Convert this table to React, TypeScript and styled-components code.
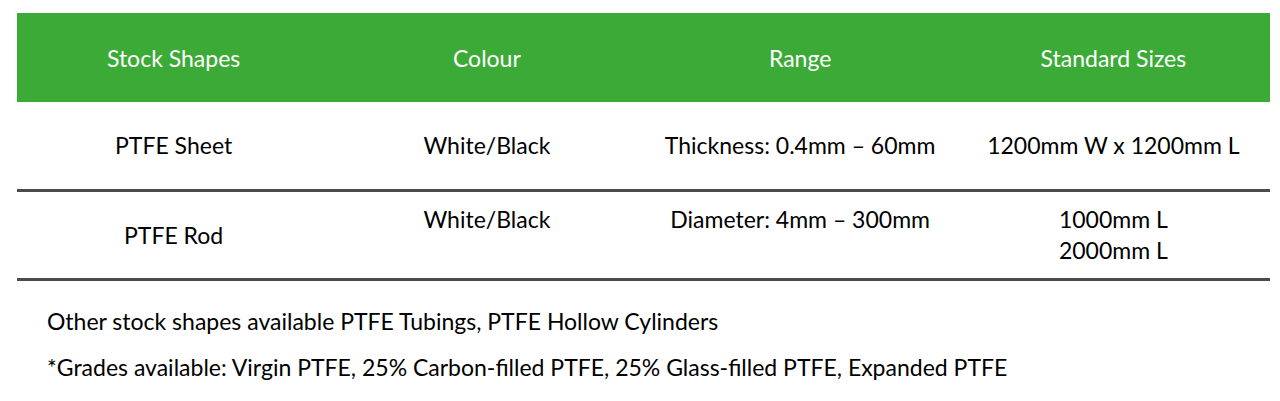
import React from 'react';
import styled, { createGlobalStyle } from 'styled-components';

const GlobalStyle = createGlobalStyle`
  body {
    margin: 0;
    background: #ffffff;
    font-family: Lato, "Open Sans", sans-serif;
  }
`;

const Page = styled.div`
  width: 1280px;
  box-sizing: border-box;
  padding: 13px 10px 0 17px;
`;

const Table = styled.div`
  display: flex;
  flex-direction: column;
`;

const HeaderRow = styled.div`
  display: grid;
  grid-template-columns: repeat(4, 1fr);
  align-items: center;
  height: 89px;
  background-color: #3caa36;
  color: #ffffff;
  font-size: 23px;
`;

const HeaderCell = styled.div`
  text-align: center;
`;

const BodyRow = styled.div<{ $pad: number }>`
  display: grid;
  grid-template-columns: repeat(4, 1fr);
  padding: ${p => p.$pad}px 0;
  border-bottom: 3px solid #4b4b4b;
  color: #000000;
  font-size: 23px;
  line-height: 31px;
`;

const Cell = styled.div<{ $valign?: 'top' | 'middle' }>`
  display: flex;
  flex-direction: column;
  align-items: center;
  justify-content: ${p => (p.$valign === 'top' ? 'flex-start' : 'center')};
  text-align: center;
`;

const Notes = styled.div`
  padding: 25px 0 0 30px;
  display: flex;
  flex-direction: column;
  gap: 15px;
  color: #000000;
  font-size: 23px;
  line-height: 31px;
`;

const headers = ['Stock Shapes', 'Colour', 'Range', 'Standard Sizes'];

export default function App() {
  return (
    <>
      <GlobalStyle />
      <Page>
        <Table>
          <HeaderRow>
            {headers.map(h => (
              <HeaderCell key={h}>{h}</HeaderCell>
            ))}
          </HeaderRow>
          <BodyRow $pad={28}>
            <Cell>PTFE Sheet</Cell>
            <Cell>White/Black</Cell>
            <Cell>Thickness: 0.4mm – 60mm</Cell>
            <Cell>1200mm W x 1200mm L</Cell>
          </BodyRow>
          <BodyRow $pad={12}>
            <Cell>PTFE Rod</Cell>
            <Cell $valign="top">White/Black</Cell>
            <Cell $valign="top">Diameter: 4mm – 300mm</Cell>
            <Cell>
              <span>1000mm L</span>
              <span>2000mm L</span>
            </Cell>
          </BodyRow>
        </Table>
        <Notes>
          <div>Other stock shapes available PTFE Tubings, PTFE Hollow Cylinders</div>
          <div>*Grades available: Virgin PTFE, 25% Carbon-filled PTFE, 25% Glass-filled PTFE, Expanded PTFE</div>
        </Notes>
      </Page>
    </>
  );
}
